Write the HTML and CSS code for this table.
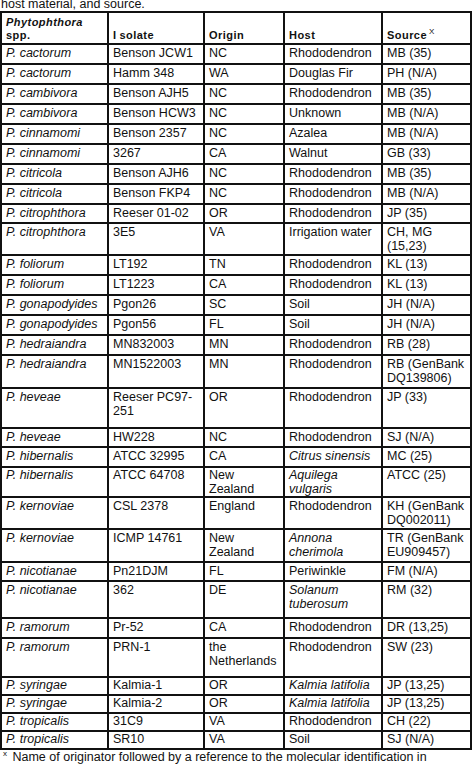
FILE: index.html
```html
<!DOCTYPE html>
<html>
<head>
<meta charset="utf-8">
<title>Phytophthora isolates</title>
<link rel="stylesheet" href="styles.css">
</head>
<body>
<div class="page">
<p class="caption">host material, and source.</p>
<table class="isolates">
<colgroup>
<col class="c-sp"><col class="c-iso"><col class="c-orig"><col class="c-host"><col class="c-src">
</colgroup>
<thead>
<tr class="h-head">
<th class="th-sp"><i>Phytophthora</i><br>spp.</th>
<th><span class="gapI">I</span>solate</th>
<th>Origin</th>
<th>Host</th>
<th>Source<sup>X</sup></th>
</tr>
</thead>
<tbody>
<tr class="r20"><td><i>P. cactorum</i></td><td>Benson JCW1</td><td>NC</td><td>Rhododendron</td><td>MB (35)</td></tr>
<tr class="r20"><td><i>P. cactorum</i></td><td>Hamm 348</td><td>WA</td><td>Douglas Fir</td><td>PH (N/A)</td></tr>
<tr class="r20"><td><i>P. cambivora</i></td><td>Benson AJH5</td><td>NC</td><td>Rhododendron</td><td>MB (35)</td></tr>
<tr class="r20"><td><i>P. cambivora</i></td><td>Benson HCW3</td><td>NC</td><td>Unknown</td><td>MB (N/A)</td></tr>
<tr class="r20"><td><i>P. cinnamomi</i></td><td>Benson 2357</td><td>NC</td><td>Azalea</td><td>MB (N/A)</td></tr>
<tr class="r20"><td><i>P. cinnamomi</i></td><td>3267</td><td>CA</td><td>Walnut</td><td>GB (33)</td></tr>
<tr class="r20"><td><i>P. citricola</i></td><td>Benson AJH6</td><td>NC</td><td>Rhododendron</td><td>MB (35)</td></tr>
<tr class="r20"><td><i>P. citricola</i></td><td>Benson FKP4</td><td>NC</td><td>Rhododendron</td><td>MB (N/A)</td></tr>
<tr class="r19"><td><i>P. citrophthora</i></td><td>Reeser 01-02</td><td>OR</td><td>Rhododendron</td><td>JP (35)</td></tr>
<tr class="r32"><td><i>P. citrophthora</i></td><td>3E5</td><td>VA</td><td>Irrigation water</td><td>CH, MG<br>(15,23)</td></tr>
<tr class="r20"><td><i>P. foliorum</i></td><td>LT192</td><td>TN</td><td>Rhododendron</td><td>KL (13)</td></tr>
<tr class="r20"><td><i>P. foliorum</i></td><td>LT1223</td><td>CA</td><td>Rhododendron</td><td>KL (13)</td></tr>
<tr class="r20"><td><i>P. gonapodyides</i></td><td>Pgon26</td><td>SC</td><td>Soil</td><td>JH (N/A)</td></tr>
<tr class="r20"><td><i>P. gonapodyides</i></td><td>Pgon56</td><td>FL</td><td>Soil</td><td>JH (N/A)</td></tr>
<tr class="r20"><td><i>P. hedraiandra</i></td><td>MN832003</td><td>MN</td><td>Rhododendron</td><td>RB (28)</td></tr>
<tr class="r33"><td><i>P. hedraiandra</i></td><td>MN1522003</td><td>MN</td><td>Rhododendron</td><td>RB (GenBank<br>DQ139806)</td></tr>
<tr class="r40"><td><i>P. heveae</i></td><td>Reeser PC97-<br>251</td><td>OR</td><td>Rhododendron</td><td>JP (33)</td></tr>
<tr class="r19"><td><i>P. heveae</i></td><td>HW228</td><td>NC</td><td>Rhododendron</td><td>SJ (N/A)</td></tr>
<tr class="r20"><td><i>P. hibernalis</i></td><td>ATCC 32995</td><td>CA</td><td><i>Citrus sinensis</i></td><td>MC (25)</td></tr>
<tr class="r29"><td><i>P. hibernalis</i></td><td>ATCC 64708</td><td>New<br>Zealand</td><td><i>Aquilega<br>vulgaris</i></td><td>ATCC (25)</td></tr>
<tr class="r32"><td><i>P. kernoviae</i></td><td>CSL 2378</td><td>England</td><td>Rhododendron</td><td>KH (GenBank<br>DQ002011)</td></tr>
<tr class="r33"><td><i>P. kernoviae</i></td><td>ICMP 14761</td><td>New<br>Zealand</td><td><i>Annona<br>cherimola</i></td><td>TR (GenBank<br>EU909457)</td></tr>
<tr class="r19"><td><i>P. nicotianae</i></td><td>Pn21DJM</td><td>FL</td><td>Periwinkle</td><td>FM (N/A)</td></tr>
<tr class="r37"><td><i>P. nicotianae</i></td><td>362</td><td>DE</td><td><i>Solanum<br>tuberosum</i></td><td>RM (32)</td></tr>
<tr class="r20"><td><i>P. ramorum</i></td><td>Pr-52</td><td>CA</td><td>Rhododendron</td><td>DR (13,25)</td></tr>
<tr class="r39"><td><i>P. ramorum</i></td><td>PRN-1</td><td>the<br>Netherlands</td><td>Rhododendron</td><td>SW (23)</td></tr>
<tr class="r18"><td><i>P. syringae</i></td><td>Kalmia-1</td><td>OR</td><td><i>Kalmia latifolia</i></td><td>JP (13,25)</td></tr>
<tr class="r18"><td><i>P. syringae</i></td><td>Kalmia-2</td><td>OR</td><td><i>Kalmia latifolia</i></td><td>JP (13,25)</td></tr>
<tr class="r18"><td><i>P. tropicalis</i></td><td>31C9</td><td>VA</td><td>Rhododendron</td><td>CH (22)</td></tr>
<tr class="r18"><td><i>P. tropicalis</i></td><td>SR10</td><td>VA</td><td>Soil</td><td>SJ (N/A)</td></tr>
</tbody>
</table>
<p class="footnote"><sup>x</sup> Name of originator followed by a reference to the molecular identification in</p>
</div>
</body>
</html>
```

FILE: styles.css
```css
html, body {
  margin: 0;
  padding: 0;
  background: #fff;
}
body {
  font-family: "Liberation Sans", Arial, Helvetica, sans-serif;
  font-size: 12.5px;
  color: #111;
  overflow: hidden;
}
.page {
  width: 474px;
}
.caption {
  margin: -2px 0 0 1px;
  line-height: 13px;
  height: 13px;
}
.isolates {
  border-collapse: collapse;
  table-layout: fixed;
  width: 472px;
  margin-left: 0;
}
.c-sp { width: 107px; }
.c-iso { width: 96px; }
.c-orig { width: 80px; }
.c-host { width: 98px; }
.c-src { width: 89px; }
.isolates th,
.isolates td {
  border: 2px solid #111;
  padding: 2px 1px 0 4px;
  line-height: 13.5px;
  vertical-align: top;
  text-align: left;
  white-space: nowrap;
  overflow: hidden;
}
.isolates th {
  font-size: 11px;
  font-weight: bold;
  vertical-align: bottom;
  line-height: 12.5px;
  padding: 2px 1px 2px 4px;
  letter-spacing: 0.45px;
}
.gapI {
  margin-right: 3px;
}
.isolates sup {
  font-size: 8px;
  font-weight: normal;
  line-height: 0;
  vertical-align: 5px;
  margin-left: 2px;
  letter-spacing: 0;
}
.h-head { height: 32px; }
.r18 { height: 18px; }
.r19 { height: 19px; }
.r20 { height: 20px; }
.r29 { height: 29px; }
.r32 { height: 32px; }
.r33 { height: 33px; }
.r37 { height: 37px; }
.r39 { height: 39px; }
.r40 { height: 40px; }
.r18 td { padding-top: 1px; }
.r29 td { padding-top: 1px; }
.footnote {
  margin: 0 0 0 3px;
  line-height: 14px;
}
.footnote sup {
  font-size: 8px;
  line-height: 0;
  vertical-align: 5px;
  margin-right: 2px;
}
```
